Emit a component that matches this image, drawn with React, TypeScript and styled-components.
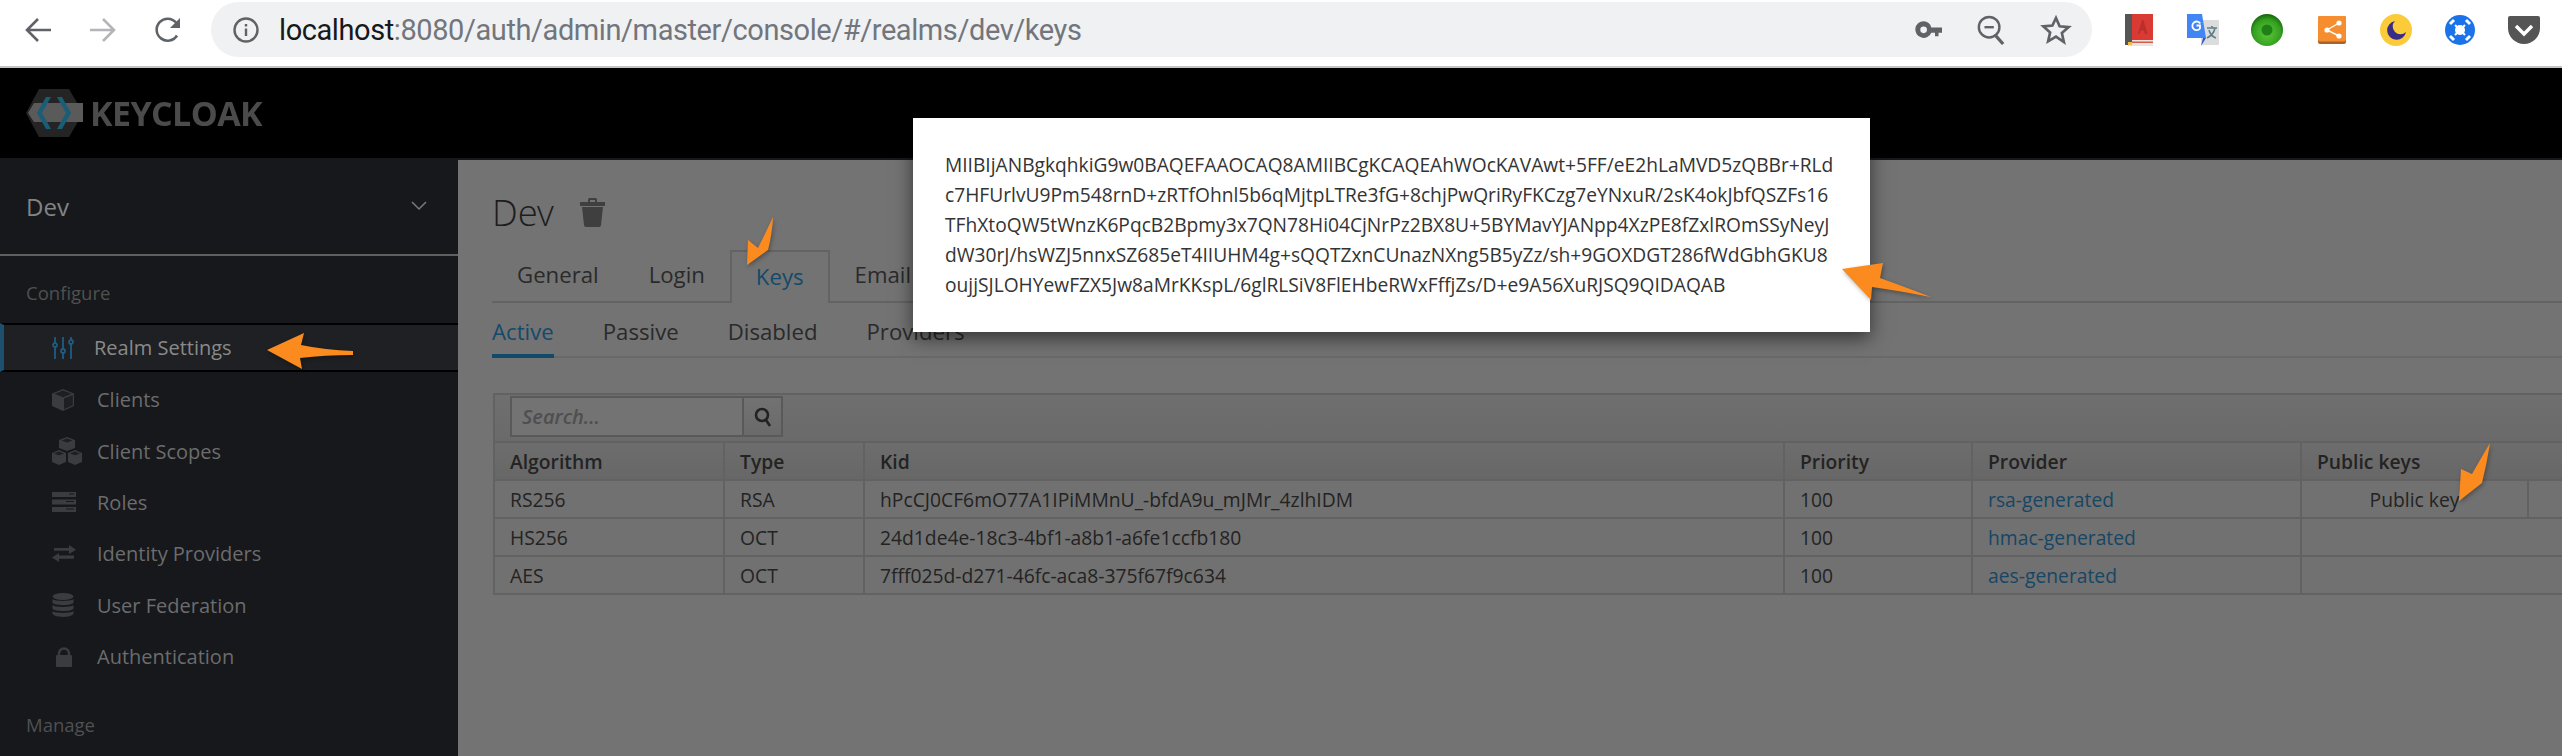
import React from "react";
import styled, { createGlobalStyle } from "styled-components";

const Global = createGlobalStyle`
  html, body { margin: 0; padding: 0; background: #737373; }
  * { box-sizing: border-box; }
`;

const Page = styled.div`
  position: relative;
  width: 2562px;
  height: 756px;
  overflow: hidden;
  display: flex;
  flex-direction: column;
  font-family: "Open Sans", sans-serif;
`;

const BrowserBar = styled.div`
  height: 68px;
  flex: none;
  background: #fff;
  border-bottom: 2px solid #c4c4c4;
  display: flex;
  align-items: flex-start;
  padding: 2px 0 0 0;
`;
const NavButtons = styled.div`
  width: 211px;
  height: 55px;
  flex: none;
  display: flex;
  align-items: center;
  padding-left: 24px;
  gap: 37px;
`;
const UrlPill = styled.div`
  width: 1881px;
  height: 55px;
  flex: none;
  border-radius: 28px;
  background: #f0f1f3;
  display: flex;
  align-items: center;
  padding: 0 20px 0 22px;
`;
const UrlText = styled.div`
  flex: 1;
  margin-left: 20px;
  font-family: "Roboto", sans-serif;
  font-size: 29px;
  letter-spacing: -0.42px;
  color: #72767c;
  white-space: nowrap;
  b { font-weight: 400; color: #17181a; }
`;
const PillIcons = styled.div`
  display: flex;
  align-items: center;
  gap: 35px;
`;
const Extensions = styled.div`
  flex: 1;
  height: 55px;
  display: flex;
  align-items: center;
  padding-left: 15px;
`;
const ExtSlot = styled.span`
  width: 64.2px;
  flex: none;
  display: flex;
  align-items: center;
  justify-content: center;
`;

const Header = styled.div`
  height: 90px;
  flex: none;
  background: #000;
  display: flex;
  align-items: center;
  padding-left: 26px;
`;
const LogoText = styled.span`
  font-family: "Open Sans", sans-serif;
  font-weight: 700;
  font-size: 34px;
  letter-spacing: -0.6px;
  color: #4b4b4b;
  margin-left: 7px;
  filter: blur(0.7px);
`;

const Body = styled.div`
  flex: 1;
  display: flex;
  min-height: 0;
`;
const Sidebar = styled.div`
  width: 458px;
  flex: none;
  background: #16181c;
  display: flex;
  flex-direction: column;
`;
const RealmSelect = styled.div`
  height: 98px;
  flex: none;
  border-bottom: 2px solid #606060;
  display: flex;
  align-items: center;
  justify-content: space-between;
  padding: 0 31px 0 26px;
  font-size: 24px;
  color: #838383;
`;
const SectionLabel = styled.div<{ $top: number; $bottom: number }>`
  padding: ${(p) => p.$top}px 0 ${(p) => p.$bottom}px 26px;
  font-size: 18.5px;
  line-height: 26px;
  color: #505050;
`;
const NavItem = styled.div<{ $active?: boolean }>`
  height: ${(p) => (p.$active ? "49px" : "51.4px")};
  display: flex;
  align-items: center;
  padding-left: ${(p) => (p.$active ? "48px" : "52px")};
  font-size: 20px;
  color: ${(p) => (p.$active ? "#8a8a8a" : "#6c6c6c")};
  background: ${(p) => (p.$active ? "#1e2023" : "transparent")};
  border-left: ${(p) => (p.$active ? "4px solid #1d4f6e" : "0")};
  border-top: ${(p) => (p.$active ? "2px solid #000" : "0")};
  border-bottom: ${(p) => (p.$active ? "2px solid #000" : "0")};
  margin-bottom: ${(p) => (p.$active ? "2px" : "0")};
`;
const NavIcon = styled.span<{ $active?: boolean }>`
  width: ${(p) => (p.$active ? "42px" : "45px")};
  flex: none;
  display: flex;
  align-items: center;
`;

const Main = styled.div`
  flex: 1;
  min-width: 0;
  margin-top: 2px;
  background: #737373;
  padding: 30px 0 0 34px;
  box-shadow: 0 -2px 0 #16181c;
  overflow: hidden;
  color: #232323;
`;
const TitleRow = styled.div`
  height: 44px;
  display: flex;
  align-items: center;
  gap: 26px;
  margin-bottom: 16px;
`;
const Title = styled.h1`
  margin: 0;
  font-family: "Open Sans Light", "Open Sans", sans-serif;
  font-weight: 300;
  font-size: 36.5px;
  color: #1d1d1d;
`;
const Tabs = styled.div`
  display: flex;
  height: 53px;
  border-bottom: 2px solid #636363;
`;
const Tab = styled.div<{ $active?: boolean }>`
  height: ${(p) => (p.$active ? "53px" : "51px")};
  padding: 0 25px 2px;
  display: flex;
  align-items: center;
  font-size: 22.2px;
  color: ${(p) => (p.$active ? "#134a6a" : "#2a2a2a")};
  background: ${(p) => (p.$active ? "#737373" : "transparent")};
  ${(p) => (p.$active ? "border: 2px solid #636363; border-bottom: 0; padding: 0 24px 2px;" : "")}
`;
const SubTabs = styled.div`
  display: flex;
  height: 55px;
  border-bottom: 2px solid #696969;
  margin-bottom: 35px;
  gap: 49px;
`;
const SubTab = styled.div<{ $active?: boolean }>`
  height: 55px;
  display: flex;
  align-items: center;
  font-size: 22.2px;
  padding-top: 5px;
  color: ${(p) => (p.$active ? "#134a6a" : "#2a2a2a")};
  border-bottom: 4px solid ${(p) => (p.$active ? "#124a69" : "transparent")};
`;

const TableCard = styled.div`
  width: 2200px;
  margin-left: 1px;
`;
const Toolbar = styled.div`
  height: 48px;
  background: linear-gradient(#6f6f6f, #6a6a6a);
  border: 2px solid #626262;
  border-bottom: 0;
  padding: 1px 0 0 15px;
  display: flex;
`;
const SearchInput = styled.div`
  width: 234px;
  height: 41px;
  background: #737373;
  border: 2px solid #595959;
  display: flex;
  align-items: center;
  padding-left: 10px;
  font-size: 20px;
  font-style: italic;
  font-weight: 600;
  color: #4f4f4f;
`;
const SearchButton = styled.div`
  width: 41px;
  height: 41px;
  margin-left: -2px;
  background: linear-gradient(#727272, #6a6a6a);
  border: 2px solid #595959;
  display: flex;
  align-items: center;
  justify-content: center;
`;
const Grid = styled.table`
  width: 2200px;
  table-layout: fixed;
  border-collapse: collapse;
  font-size: 19.3px;
  color: #232323;
  th, td {
    border: 2px solid #626262;
    height: 38px;
    padding: 0 15px;
    text-align: left;
    white-space: nowrap;
    overflow: hidden;
  }
  th {
    font-weight: 600;
    background: linear-gradient(#6d6d6d, #676767);
  }
  td { background: #717171; }
`;
const ProviderLink = styled.span`
  color: #174664;
`;
const KeyCell = styled.td`
  && { text-align: center; }
`;
const Modal = styled.div`
  position: absolute;
  left: 913px;
  top: 118px;
  width: 957px;
  height: 214px;
  background: #fff;
  box-shadow: 0 6px 18px rgba(0, 0, 0, 0.55);
  padding: 32px 0 0 32px;
  font-size: 19.2px;
  line-height: 30px;
  color: #333;
  white-space: nowrap;
`;
const Annotations = styled.svg`
  position: absolute;
  left: 0;
  top: 0;
  pointer-events: none;
  filter: drop-shadow(1px 2px 2px rgba(0, 0, 0, 0.3));
`;

const keyLines = [
  "MIIBIjANBgkqhkiG9w0BAQEFAAOCAQ8AMIIBCgKCAQEAhWOcKAVAwt+5FF/eE2hLaMVD5zQBBr+RLd",
  "c7HFUrlvU9Pm548rnD+zRTfOhnl5b6qMjtpLTRe3fG+8chjPwQriRyFKCzg7eYNxuR/2sK4okJbfQSZFs16",
  "TFhXtoQW5tWnzK6PqcB2Bpmy3x7QN78Hi04CjNrPz2BX8U+5BYMavYJANpp4XzPE8fZxlROmSSyNeyJ",
  "dW30rJ/hsWZJ5nnxSZ685eT4IIUHM4g+sQQTZxnCUnazNXng5B5yZz/sh+9GOXDGT286fWdGbhGKU8",
  "oujjSJLOHYewFZX5Jw8aMrKKspL/6glRLSiV8FlEHbeRWxFffjZs/D+e9A56XuRJSQ9QIDAQAB",
];

const Back = ({ color }: { color: string }) => (
  <svg width="28" height="28" viewBox="0 0 28 28" fill="none" stroke={color} strokeWidth="2.6">
    <path d="M27 14H3M14 3 3 14l11 11" />
  </svg>
);
const Forward = ({ color }: { color: string }) => (
  <svg width="28" height="28" viewBox="0 0 28 28" fill="none" stroke={color} strokeWidth="2.6">
    <path d="M1 14h24M14 3l11 11-11 11" />
  </svg>
);
const Reload = () => (
  <svg width="28" height="28" viewBox="0 0 28 28" fill="none">
    <path d="M23 19.5A11 11 0 1 1 22 6.5" stroke="#5f6368" strokeWidth="2.6" />
    <path d="M26 2v10H16z" fill="#5f6368" />
  </svg>
);
const Info = () => (
  <svg width="26" height="26" viewBox="0 0 26 26" fill="none" stroke="#5f6368" strokeWidth="2.4">
    <circle cx="13" cy="13" r="11.5" />
    <path d="M13 11.5V19M13 7v2.6" />
  </svg>
);
const KeyIcon = () => (
  <svg width="28" height="22" viewBox="0 0 32 24" fill="#5f6368">
    <path d="M11 2a9.500 9.500 0 1 0 8.800 13H24v4h4v-4h4V9H19.800A9.500 9.500 0 0 0 11 2Zm0 6a3.800 3.800 0 1 1 0 7.600A3.800 3.800 0 0 1 11 8Z" />
  </svg>
);
const ZoomOut = () => (
  <svg width="28" height="30" viewBox="0 0 30 32" fill="none" stroke="#5f6368" strokeWidth="2.6">
    <circle cx="13" cy="13" r="11" />
    <path d="M8 13h10" />
    <path d="M20 22l8 9" strokeWidth="3.4" />
  </svg>
);
const Star = () => (
  <svg width="32" height="32" viewBox="0 0 24 24" fill="none" stroke="#5f6368" strokeWidth="2">
    <path d="m12 3 2.700 6.200 6.800.6-5.100 4.500 1.500 6.700L12 17l-5.900 3.500 1.500-6.700-5.100-4.500 6.800-.6z" />
  </svg>
);

const ExtBook = () => (
  <svg width="28" height="32" viewBox="0 0 28 32">
    <rect x="6" y="0" width="22" height="28" fill="#d93a33" />
    <rect x="0" y="0" width="7" height="31" fill="#555" />
    <path d="M7 26h21v6H7z" fill="#e9e4de" />
    <path d="M7 27.500h21v1.500H7z" fill="#d85b50" />
    <path d="M3 28h4v4l-2-1-2 1z" fill="#f3bb3c" />
    <path d="M13 20 17 6h1.500l4 14h-2.500l-1-3.500h-3.500L14.500 20z" fill="#b92f2a" />
  </svg>
);
const ExtTranslate = () => (
  <svg width="32" height="32" viewBox="0 0 32 32">
    <rect x="14" y="6" width="18" height="25" rx="1" fill="#dcdcdc" />
    <path d="M0 0h15l4 24H0z" fill="#4285f4" />
    <path d="M16 24h3l-5 8z" fill="#2a56c6" />
    <path d="M13.300 9.500A4.300 4.300 0 1 0 13 14.500v-3H9.500" fill="none" stroke="#fff" strokeWidth="1.800" />
    <path d="M20 14h10M25 12v2M28 14c-1 5-4 8-8 10M22 16c1 4 4 7 7 8" fill="none" stroke="#607d8b" strokeWidth="1.600" />
  </svg>
);
const ExtGreen = () => (
  <svg width="32" height="32" viewBox="0 0 32 32">
    <defs>
      <radialGradient id="gr" cx="0.5" cy="0.6" r="0.6">
        <stop offset="0" stopColor="#5cc83a" />
        <stop offset="0.7" stopColor="#35a020" />
        <stop offset="1" stopColor="#12650a" />
      </radialGradient>
    </defs>
    <circle cx="16" cy="16" r="16" fill="url(#gr)" />
    <circle cx="16" cy="16" r="5.500" fill="#1f8015" />
  </svg>
);
const ExtShare = () => (
  <svg width="28" height="28" viewBox="0 0 28 28">
    <rect width="28" height="28" rx="2" fill="#a8622a" />
    <rect width="28" height="25.500" rx="2" fill="#f68d2e" />
    <path d="M21 7 9 14l12 6" fill="none" stroke="#fff" strokeWidth="1.400" />
    <circle cx="9" cy="14" r="2.600" fill="#fff" />
    <circle cx="21" cy="7" r="2.600" fill="#fff" />
    <circle cx="21" cy="20" r="2.600" fill="#fff" />
  </svg>
);
const ExtMoon = () => (
  <svg width="32" height="32" viewBox="0 0 32 32">
    <circle cx="16" cy="16" r="16" fill="#fbcb3a" />
    <path d="M15 7a9.500 9.500 0 1 0 11 11 7.500 7.500 0 0 1-11-11Z" fill="#3a2d88" />
  </svg>
);
const ExtHub = () => (
  <svg width="30" height="30" viewBox="0 0 30 30">
    <circle cx="15" cy="15" r="15" fill="#1a73e8" />
    <path d="M10 10l10 10M20 10 10 20" stroke="#fff" strokeWidth="2" />
    <path d="M5 9l4-4M21 5l4 4M5 21l4 4M21 25l4-4" stroke="#fff" strokeWidth="3" />
    <circle cx="15" cy="15" r="5" fill="#fff" />
  </svg>
);
const ExtPocket = () => (
  <svg width="32" height="28" viewBox="0 0 32 28">
    <path d="M2 0h28a2 2 0 0 1 2 2v10a16 16 0 0 1-32 0V2a2 2 0 0 1 2-2Z" fill="#555" />
    <path d="M8 10l8 8 8-8" fill="none" stroke="#fff" strokeWidth="3.400" />
  </svg>
);

const Logo = () => (
  <svg width="57" height="48" viewBox="0 0 57 48">
    <path d="M13 0h30l14 24-14 24H13L0 24z" fill="#242424" />
    <path d="M8 14h49v19H8L2 24z" fill="#5a5a5a" />
    <path d="M20 8 11 24l9 16h5l-9-16 9-16z" fill="#1a5d76" />
    <path d="M31 8l9 16-9 16h5l9-16-9-16z" fill="#1a5d76" />
  </svg>
);

const Chevron = () => (
  <svg width="16" height="10" viewBox="0 0 16 10" fill="none" stroke="#7a7a7a" strokeWidth="1.500">
    <path d="M1 1l7 7 7-7" />
  </svg>
);
const Sliders = () => (
  <svg width="22" height="22" viewBox="0 0 22 22" fill="none" stroke="#1f5c80" strokeWidth="1.800">
    <path d="M3 0v6M3 10v12M11 0v12M11 16v6M19 0v3M19 7v15" />
    <circle cx="3" cy="8" r="2" />
    <circle cx="11" cy="14" r="2" />
    <circle cx="19" cy="5" r="2" />
  </svg>
);
const Cube = () => (
  <svg width="22" height="22" viewBox="0 0 22 22">
    <path d="M11 0 22 4.500v12.500L11 22 0 17V4.500z" fill="#3a3c3f" />
    <path d="M11 1.500 19.500 4.800 11 8.200 2.500 4.800z" fill="#1d1f22" />
    <path d="M12 9.500 20.800 6v10.200L12 20.200z" fill="#1d1f22" />
  </svg>
);
const Cubes = () => (
  <svg width="30" height="28" viewBox="0 0 30 28">
    <path d="M15 0l8 3v8l-8 3-8-3V3z" fill="#3a3c3f" />
    <path d="M7 13l7 3v9l-7 3-7-3v-9z" fill="#3a3c3f" />
    <path d="M23 13l7 3v9l-7 3-7-3v-9z" fill="#3a3c3f" />
    <path d="M15 1.500 20.500 3.400 15 5.400 9.500 3.400zM7 14.500 12 16.400 7 18.300 2 16.400zM23 14.500 28 16.400 23 18.300 18 16.400z" fill="#1d1f22" />
  </svg>
);
const Server = () => (
  <svg width="24" height="20" viewBox="0 0 24 20">
    <rect y="0" width="24" height="5" fill="#3a3c3f" />
    <rect y="7.500" width="24" height="5" fill="#3a3c3f" />
    <rect y="15" width="24" height="5" fill="#3a3c3f" />
    <path d="M17 2h5M14 9.500h8M14 17h8" stroke="#16181c" strokeWidth="1" />
  </svg>
);
const Exchange = () => (
  <svg width="24" height="17" viewBox="0 0 24 17" fill="#3a3c3f">
    <path d="M2 3h15V0l7 4.700-7 4.300V5.800H2z" />
    <path d="M22 10.500H7V8L0 12.500 7 17v-3.200h15z" />
  </svg>
);
const Database = () => (
  <svg width="22" height="24" viewBox="0 0 22 24" fill="#3a3c3f">
    <ellipse cx="11" cy="3.500" rx="10.500" ry="3.500" />
    <path d="M.5 6c2 2.500 19 2.500 21 0v3.500c-1 3.500-20 3.500-21 0zM.5 12c2 2.500 19 2.500 21 0v3.500c-1 3.500-20 3.500-21 0zM.5 18c2 2.500 19 2.500 21 0v2.500c-1 4.500-20 4.500-21 0z" />
  </svg>
);
const Lock = () => (
  <svg width="24" height="20" viewBox="0 0 24 20">
    <path d="M7 9V6.500a5 5 0 0 1 10 0V9" fill="none" stroke="#3a3c3f" strokeWidth="2.400" />
    <rect x="4" y="8" width="16" height="12" rx="1" fill="#3a3c3f" />
  </svg>
);
const Trash = () => (
  <svg width="25" height="29" viewBox="0 0 25 29" fill="#3f3f3f">
    <path d="M8 4V1.500A1.500 1.500 0 0 1 9.500 0h6A1.500 1.500 0 0 1 17 1.500V4h8v4H0V4zm2 0h5V2h-5z" />
    <path d="M2 9h21l-2 18a2 2 0 0 1-2 2H6a2 2 0 0 1-2-2z" />
  </svg>
);
const SearchIcon = () => (
  <svg width="18" height="20" viewBox="0 0 18 20" fill="none" stroke="#222" strokeWidth="2.600">
    <circle cx="8" cy="8" r="6" />
    <path d="M12 13l4 6" />
  </svg>
);

const navItems: [string, React.ReactNode][] = [
  ["Clients", <Cube />],
  ["Client Scopes", <Cubes />],
  ["Roles", <Server />],
  ["Identity Providers", <Exchange />],
  ["User Federation", <Database />],
  ["Authentication", <Lock />],
];

const extensions = [ExtBook, ExtTranslate, ExtGreen, ExtShare, ExtMoon, ExtHub, ExtPocket];

export default function App() {
  return (
    <Page>
      <Global />
      <BrowserBar>
        <NavButtons>
          <Back color="#5f6368" />
          <Forward color="#b3b5b8" />
          <Reload />
        </NavButtons>
        <UrlPill>
          <Info />
          <UrlText>
            <b>localhost</b>:8080/auth/admin/master/console/#/realms/dev/keys
          </UrlText>
          <PillIcons>
            <KeyIcon />
            <ZoomOut />
            <Star />
          </PillIcons>
        </UrlPill>
        <Extensions>
          {extensions.map((Ext, i) => (
            <ExtSlot key={i}>
              <Ext />
            </ExtSlot>
          ))}
        </Extensions>
      </BrowserBar>
      <Header>
        <Logo />
        <LogoText>KEYCLOAK</LogoText>
      </Header>
      <Body>
        <Sidebar>
          <RealmSelect>
            Dev
            <Chevron />
          </RealmSelect>
          <SectionLabel $top={24} $bottom={17}>Configure</SectionLabel>
          <NavItem $active>
            <NavIcon $active>
              <Sliders />
            </NavIcon>
            Realm Settings
          </NavItem>
          {navItems.map(([label, icon]) => (
            <NavItem key={label}>
              <NavIcon>{icon}</NavIcon>
              {label}
            </NavItem>
          ))}
          <SectionLabel $top={30} $bottom={0}>Manage</SectionLabel>
        </Sidebar>
        <Main>
          <TitleRow>
            <Title>Dev</Title>
            <Trash />
          </TitleRow>
          <Tabs>
            <Tab>General</Tab>
            <Tab>Login</Tab>
            <Tab $active>Keys</Tab>
            <Tab>Email</Tab>
          </Tabs>
          <SubTabs>
            <SubTab $active>Active</SubTab>
            <SubTab>Passive</SubTab>
            <SubTab>Disabled</SubTab>
            <SubTab>Providers</SubTab>
          </SubTabs>
          <TableCard>
            <Toolbar>
              <SearchInput>Search...</SearchInput>
              <SearchButton>
                <SearchIcon />
              </SearchButton>
            </Toolbar>
            <Grid>
              <colgroup>
                <col width="230" />
                <col width="140" />
                <col width="920" />
                <col width="188" />
                <col width="329" />
                <col width="227" />
                <col width="166" />
              </colgroup>
              <thead>
                <tr>
                  <th>Algorithm</th>
                  <th>Type</th>
                  <th>Kid</th>
                  <th>Priority</th>
                  <th>Provider</th>
                  <th colSpan={2}>Public keys</th>
                </tr>
              </thead>
              <tbody>
                <tr>
                  <td>RS256</td>
                  <td>RSA</td>
                  <td>hPcCJ0CF6mO77A1IPiMMnU_-bfdA9u_mJMr_4zlhIDM</td>
                  <td>100</td>
                  <td>
                    <ProviderLink>rsa-generated</ProviderLink>
                  </td>
                  <KeyCell>Public key</KeyCell>
                  <td />
                </tr>
                <tr>
                  <td>HS256</td>
                  <td>OCT</td>
                  <td>24d1de4e-18c3-4bf1-a8b1-a6fe1ccfb180</td>
                  <td>100</td>
                  <td>
                    <ProviderLink>hmac-generated</ProviderLink>
                  </td>
                  <td colSpan={2} />
                </tr>
                <tr>
                  <td>AES</td>
                  <td>OCT</td>
                  <td>7fff025d-d271-46fc-aca8-375f67f9c634</td>
                  <td>100</td>
                  <td>
                    <ProviderLink>aes-generated</ProviderLink>
                  </td>
                  <td colSpan={2} />
                </tr>
              </tbody>
            </Grid>
          </TableCard>
        </Main>
      </Body>
      <Modal>
        {keyLines.map((line) => (
          <div key={line}>{line}</div>
        ))}
      </Modal>
      <Annotations width="2562" height="756" viewBox="0 0 2562 756" fill="#fb8b1e">
        <path d="M267 350 304 333 301 345Q325 350 353 351V355Q325 355 300 358L302 369Z" />
        <path d="M747 265 748 240 758 248Q766 232 773 217 772 235 768 250Z" />
        <path d="M1842 269 1883 263 1880 278Q1905 287 1931 297 1900 291 1872 287L1871 300Z" />
        <path d="M2459 501 2461 469 2472 474Q2481 458 2490 443 2487 463 2482 483Z" />
      </Annotations>
    </Page>
  );
}
